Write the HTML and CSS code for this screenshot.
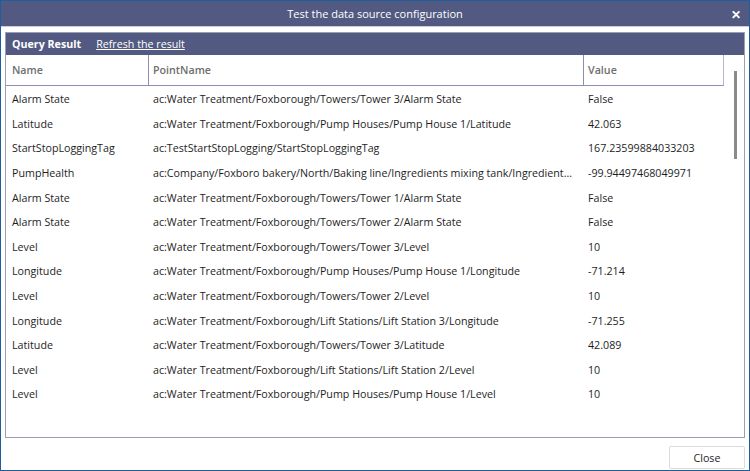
FILE: index.html
```html
<!DOCTYPE html>
<html>
<head>
<meta charset="utf-8">
<link rel="stylesheet" href="styles.css">
</head>
<body>
<div class="window">
  <div class="titlebar">
    <span class="title">Test the data source configuration</span>
    <span class="close-x">&#x2715;</span>
  </div>
  <div class="body">
    <div class="group">
      <div class="group-head">
        <span class="group-title">Query Result</span>
        <span class="refresh">Refresh the result</span>
      </div>
      <div class="grid-area">
        <div class="table">
          <div class="row head">
            <div class="cell c1">Name</div>
            <div class="cell c2">PointName</div>
            <div class="cell c3">Value</div>
          </div>
          <div class="row"><div class="cell c1">Alarm State</div><div class="cell c2">ac:Water Treatment/Foxborough/Towers/Tower 3/Alarm State</div><div class="cell c3">False</div></div>
          <div class="row"><div class="cell c1">Latitude</div><div class="cell c2">ac:Water Treatment/Foxborough/Pump Houses/Pump House 1/Latitude</div><div class="cell c3">42.063</div></div>
          <div class="row"><div class="cell c1">StartStopLoggingTag</div><div class="cell c2">ac:TestStartStopLogging/StartStopLoggingTag</div><div class="cell c3">167.23599884033203</div></div>
          <div class="row"><div class="cell c1">PumpHealth</div><div class="cell c2">ac:Company/Foxboro bakery/North/Baking line/Ingredients mixing tank/Ingredient...</div><div class="cell c3">-99.94497468049971</div></div>
          <div class="row"><div class="cell c1">Alarm State</div><div class="cell c2">ac:Water Treatment/Foxborough/Towers/Tower 1/Alarm State</div><div class="cell c3">False</div></div>
          <div class="row"><div class="cell c1">Alarm State</div><div class="cell c2">ac:Water Treatment/Foxborough/Towers/Tower 2/Alarm State</div><div class="cell c3">False</div></div>
          <div class="row"><div class="cell c1">Level</div><div class="cell c2">ac:Water Treatment/Foxborough/Towers/Tower 3/Level</div><div class="cell c3">10</div></div>
          <div class="row"><div class="cell c1">Longitude</div><div class="cell c2">ac:Water Treatment/Foxborough/Pump Houses/Pump House 1/Longitude</div><div class="cell c3">-71.214</div></div>
          <div class="row"><div class="cell c1">Level</div><div class="cell c2">ac:Water Treatment/Foxborough/Towers/Tower 2/Level</div><div class="cell c3">10</div></div>
          <div class="row"><div class="cell c1">Longitude</div><div class="cell c2">ac:Water Treatment/Foxborough/Lift Stations/Lift Station 3/Longitude</div><div class="cell c3">-71.255</div></div>
          <div class="row"><div class="cell c1">Latitude</div><div class="cell c2">ac:Water Treatment/Foxborough/Towers/Tower 3/Latitude</div><div class="cell c3">42.089</div></div>
          <div class="row"><div class="cell c1">Level</div><div class="cell c2">ac:Water Treatment/Foxborough/Lift Stations/Lift Station 2/Level</div><div class="cell c3">10</div></div>
          <div class="row"><div class="cell c1">Level</div><div class="cell c2">ac:Water Treatment/Foxborough/Pump Houses/Pump House 1/Level</div><div class="cell c3">10</div></div>
        </div>
        <div class="scrollbar"><div class="thumb"></div></div>
      </div>
    </div>
    <div class="footer">
      <button class="btn">Close</button>
    </div>
  </div>
</div>
</body>
</html>
```

FILE: styles.css
```css
html, body {
  margin: 0;
  padding: 0;
  background: #ffffff;
}
body {
  font-family: "Open Sans", "Noto Sans", "Liberation Sans", sans-serif;
  font-size: 10.7px;
  color: #1e1e1e;
}
.window {
  width: 750px;
  height: 471px;
  box-sizing: border-box;
  border: 1px solid #1f5e9c;
  display: flex;
  flex-direction: column;
  background: #ffffff;
}
.titlebar {
  height: 25px;
  flex: none;
  background: #525a82;
  border-bottom: 1px solid #c9cbdb;
  color: #ffffff;
  display: flex;
  align-items: center;
  justify-content: center;
  position: relative;
  font-size: 11px;
}
.close-x {
  position: absolute;
  right: 8px;
  top: 5px;
  font-size: 12px;
  font-weight: bold;
}
.body {
  flex: 1;
  display: flex;
  flex-direction: column;
  padding: 5px 4px 1px 4px;
}
.group {
  height: 406px;
  box-sizing: border-box;
  border: 1px solid #9a9db5;
  display: flex;
  flex-direction: column;
}
.group-head {
  height: 22px;
  flex: none;
  background: #525a82;
  color: #ffffff;
  display: flex;
  align-items: center;
  padding-left: 6px;
  gap: 15px;
}
.group-title {
  font-weight: bold;
}
.refresh {
  text-decoration: underline;
}
.grid-area {
  flex: 1;
  display: flex;
  overflow: hidden;
}
.table {
  width: 718px;
  flex: none;
}
.row {
  display: grid;
  grid-template-columns: 142px 435px 141px;
  height: 24.6px;
  box-sizing: border-box;
  padding-top: 2px;
  align-items: center;
}
.row.head {
  height: 31px;
  padding-top: 0;
  border-bottom: 1px solid #8c8fb3;
  border-right: 1px solid #b4b6d0;
  color: #6e6e6e;
  font-weight: 600;
}
.cell {
  white-space: nowrap;
  overflow: hidden;
  padding-left: 6px;
  padding-right: 4px;
}
.row.head .cell {
  height: 100%;
  display: flex;
  align-items: center;
}
.row.head .c2, .row.head .c3 {
  border-left: 1px solid #8c8fb3;
  padding-left: 4px;
}
.row .c2, .row .c3 {
  padding-left: 5px;
}
.scrollbar {
  flex: 1;
  position: relative;
}
.thumb {
  position: absolute;
  left: 10px;
  top: 16px;
  width: 3px;
  height: 88px;
  background: #8a8a8a;
}
.footer {
  flex: 1;
  display: flex;
  justify-content: flex-end;
  align-items: flex-end;
}
.btn {
  width: 76px;
  height: 23px;
  background: #ffffff;
  border: 1px solid #dcdcdc;
  border-radius: 2px;
  font-family: inherit;
  font-size: 10.7px;
  color: #1e1e1e;
  margin: 0;
}
```
